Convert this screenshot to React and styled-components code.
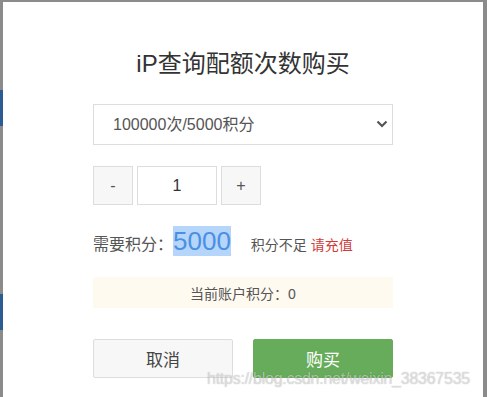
import React from "react";
import styled, { createGlobalStyle } from "styled-components";

const GlobalStyle = createGlobalStyle`
  html, body {
    margin: 0;
    padding: 0;
    background: #8b8b8b;
  }
  body {
    font-family: "Liberation Sans", "Noto Sans CJK SC", sans-serif;
    color: #555;
  }
`;

const Page = styled.div`
  display: grid;
  grid-template-columns: 3px 480px 4px;
  width: 487px;
  height: 397px;
  overflow: hidden;
  padding-top: 2px;
  box-sizing: border-box;
`;

const Backdrop = styled.div`
  display: flex;
  flex-direction: column;
  gap: 168px;
  padding-top: 88px;
`;

const BlueBar = styled.div`
  height: 36px;
  background: #2d5b93;
`;

const Modal = styled.div`
  position: relative;
  background: #fff;
  display: flex;
  flex-direction: column;
  padding: 46px 90px 0;
  min-height: 420px;
  box-sizing: border-box;
`;

const Title = styled.h1`
  margin: 0 0 24px;
  font-size: 24px;
  line-height: 32px;
  font-weight: normal;
  text-align: center;
  color: #333;
`;

const SelectWrap = styled.div`
  position: relative;
  height: 41px;
`;

const Select = styled.select`
  appearance: none;
  width: 100%;
  height: 100%;
  border: 1px solid #ddd;
  border-radius: 0;
  background: #fff;
  padding: 0 19px;
  font: inherit;
  font-size: 16px;
  color: #555;
  outline: none;
`;

const Chevron = styled.svg`
  position: absolute;
  right: 5px;
  top: 16px;
  pointer-events: none;
`;

const Stepper = styled.div`
  display: flex;
  gap: 4px;
  margin-top: 21px;
  height: 39px;
`;

const StepButton = styled.button`
  width: 40px;
  border: 1px solid #ddd;
  background: #f7f7f7;
  font: inherit;
  font-size: 16px;
  color: #555;
  padding: 0;
`;

const CountInput = styled.input`
  width: 80px;
  box-sizing: border-box;
  border: 1px solid #ddd;
  text-align: center;
  font: inherit;
  font-size: 16px;
  color: #333;
  outline: none;
`;

const PointsRow = styled.div`
  display: flex;
  align-items: baseline;
  margin-top: 21px;
  font-size: 16px;
  color: #555;
`;

const Amount = styled.span`
  font-size: 26px;
  line-height: 30px;
  color: #4a90e2;
  background: #b6d5fb;
`;

const Hint = styled.span`
  margin-left: 20px;
  font-size: 14px;
  color: #555;
`;

const Recharge = styled.a`
  margin-left: 4px;
  color: #d03c3c;
  text-decoration: none;
`;

const Notice = styled.div`
  margin-top: 21px;
  height: 31px;
  display: flex;
  align-items: center;
  justify-content: center;
  background: #fffaf0;
  font-size: 14px;
  color: #555;
`;

const Actions = styled.div`
  display: flex;
  justify-content: space-between;
  margin-top: 31px;
`;

const ActionButton = styled.button`
  width: 140px;
  height: 39px;
  border-radius: 2px;
  font: inherit;
  font-size: 17px;
  border: 1px solid ${(p) => (p.$primary ? "#67ac5b" : "#ddd")};
  background: ${(p) => (p.$primary ? "#67ac5b" : "#f7f7f7")};
  color: ${(p) => (p.$primary ? "#fff" : "#444")};
`;

const Watermark = styled.div`
  position: absolute;
  left: 204px;
  top: 368px;
  font-size: 16px;
  letter-spacing: -0.25px;
  color: rgba(255, 255, 255, 0.55);
  text-shadow: 0 0 1px rgba(0, 0, 0, 0.35);
  white-space: nowrap;
  pointer-events: none;
`;

export default function App() {
  return (
    <>
      <GlobalStyle />
      <Page>
        <Backdrop>
          <BlueBar />
          <BlueBar />
        </Backdrop>
        <Modal>
          <Title>iP查询配额次数购买</Title>
          <SelectWrap>
            <Select defaultValue="100000">
              <option value="100000">100000次/5000积分</option>
            </Select>
            <Chevron width="12" height="8" viewBox="0 0 12 8">
              <path d="M1.5 1.5 L6 6 L10.5 1.5" fill="none" stroke="#555" strokeWidth="2.2" />
            </Chevron>
          </SelectWrap>
          <Stepper>
            <StepButton>-</StepButton>
            <CountInput defaultValue="1" />
            <StepButton>+</StepButton>
          </Stepper>
          <PointsRow>
            需要积分：<Amount>5000</Amount>
            <Hint>
              积分不足<Recharge href="#">请充值</Recharge>
            </Hint>
          </PointsRow>
          <Notice>当前账户积分：0</Notice>
          <Actions>
            <ActionButton>取消</ActionButton>
            <ActionButton $primary>购买</ActionButton>
          </Actions>
          <Watermark>https://blog.csdn.net/weixin_38367535</Watermark>
        </Modal>
        <div />
      </Page>
    </>
  );
}
